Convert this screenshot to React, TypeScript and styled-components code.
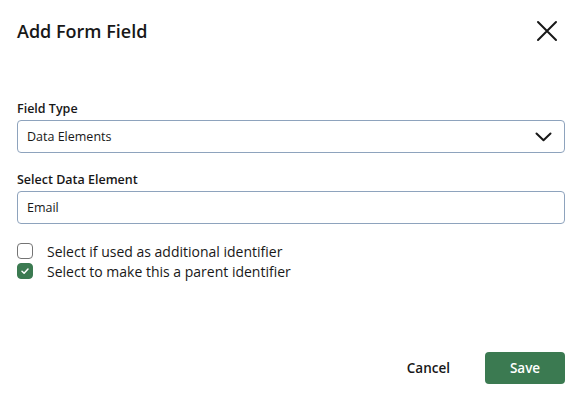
import { useState } from 'react';
import { createGlobalStyle, styled } from 'styled-components';

const GlobalStyle = createGlobalStyle`
  html, body {
    margin: 0;
    padding: 0;
    background: #ffffff;
  }

  body {
    font-family: 'Open Sans', 'Noto Sans', Arial, sans-serif;
    color: #181818;
  }
`;

interface CheckboxRowProps {
  label: string;
  checked: boolean;
  onToggle: () => void;
}

const CheckboxRow = ({ label, checked, onToggle }: CheckboxRowProps) => (
  <StCheckRow onClick={onToggle}>
    <StBox $checked={checked}>
      {checked && (
        <svg width="10" height="10" viewBox="0 0 10 10" fill="none">
          <path
            d="M2 5.2 L4.1 7.2 L8 3"
            stroke="#ffffff"
            strokeWidth="1.5"
            strokeLinecap="round"
            strokeLinejoin="round"
          />
        </svg>
      )}
    </StBox>
    <span>{label}</span>
  </StCheckRow>
);

const App = () => {
  const [additional, setAdditional] = useState<boolean>(false);
  const [parent, setParent] = useState<boolean>(true);

  return (
    <>
      <GlobalStyle />
      <StModal>
        <StHeader>
          <h2>Add Form Field</h2>
          <StClose type="button" aria-label="Close">
            <svg width="22" height="22" viewBox="0 0 22 22" fill="none">
              <path
                d="M2 2 L20 20 M20 2 L2 20"
                stroke="#181818"
                strokeWidth="2"
                strokeLinecap="round"
              />
            </svg>
          </StClose>
        </StHeader>

        <StBody>
          <StField>
            <StLabel>Field Type</StLabel>
            <StInputBox>
              <span>Data Elements</span>
              <svg width="17" height="10" viewBox="0 0 17 10" fill="none">
                <path
                  d="M1.5 1.5 L8.5 8.3 L15.5 1.5"
                  stroke="#181818"
                  strokeWidth="2"
                  strokeLinecap="round"
                  strokeLinejoin="round"
                />
              </svg>
            </StInputBox>
          </StField>

          <StField>
            <StLabel>Select Data Element</StLabel>
            <StInputBox>
              <span>Email</span>
            </StInputBox>
          </StField>

          <StChecks>
            <CheckboxRow
              label="Select if used as additional identifier"
              checked={additional}
              onToggle={() => setAdditional((prev) => !prev)}
            />
            <CheckboxRow
              label="Select to make this a parent identifier"
              checked={parent}
              onToggle={() => setParent((prev) => !prev)}
            />
          </StChecks>
        </StBody>

        <StFooter>
          <StCancel type="button">Cancel</StCancel>
          <StSave type="button">Save</StSave>
        </StFooter>
      </StModal>
    </>
  );
};

export default App;

const StModal = styled.div`
  display: flex;
  flex-direction: column;

  width: 584px;
  height: 402px;
  padding: 0 19px 0 17px;
  box-sizing: border-box;

  background: #ffffff;
`;

const StHeader = styled.header`
  display: flex;
  justify-content: space-between;
  align-items: center;

  height: 62px;

  & > h2 {
    margin: 0;
    font-size: 18px;
    font-weight: 600;
    color: #181818;
  }
`;

const StClose = styled.button`
  display: flex;
  align-items: center;
  justify-content: center;

  width: 24px;
  height: 24px;
  margin-right: 6px;
  padding: 0;

  border: none;
  background: transparent;
  cursor: pointer;
`;

const StBody = styled.div`
  display: flex;
  flex-direction: column;
  gap: 19px;

  padding-top: 39px;
`;

const StField = styled.div`
  display: flex;
  flex-direction: column;
  gap: 3px;
`;

const StLabel = styled.label`
  font-size: 12.5px;
  font-weight: 600;
  line-height: 16px;
  color: #181818;
`;

const StInputBox = styled.div`
  display: flex;
  justify-content: space-between;
  align-items: center;

  height: 33px;
  padding: 0 12px 0 9px;
  box-sizing: border-box;

  border: 1px solid #8ea3bd;
  border-radius: 4px;
  background: #ffffff;

  font-size: 12.5px;
  color: #181818;
`;

const StChecks = styled.div`
  display: flex;
  flex-direction: column;
  gap: 4px;
`;

const StCheckRow = styled.div`
  display: flex;
  align-items: center;
  gap: 14px;

  height: 16px;

  font-size: 14px;
  color: #181818;
  cursor: pointer;
`;

const StBox = styled.span<{ $checked: boolean }>`
  display: flex;
  align-items: center;
  justify-content: center;

  width: 16px;
  height: 16px;
  box-sizing: border-box;

  border: 1px solid ${({ $checked }) => ($checked ? '#3b7a51' : '#747474')};
  border-radius: 4px;
  background: ${({ $checked }) => ($checked ? '#3b7a51' : '#ffffff')};
`;

const StFooter = styled.footer`
  display: flex;
  justify-content: flex-end;
  align-items: center;
  gap: 35px;

  margin-top: auto;
  margin-bottom: 18px;
`;

const StCancel = styled.button`
  padding: 0;

  border: none;
  background: transparent;

  font-family: inherit;
  font-size: 13.5px;
  font-weight: 600;
  color: #181818;
  cursor: pointer;
`;

const StSave = styled.button`
  width: 80px;
  height: 32px;

  border: none;
  border-radius: 4px;
  background: #3b7a51;

  font-family: inherit;
  font-size: 13.5px;
  font-weight: 600;
  color: #ffffff;
  cursor: pointer;
`;
